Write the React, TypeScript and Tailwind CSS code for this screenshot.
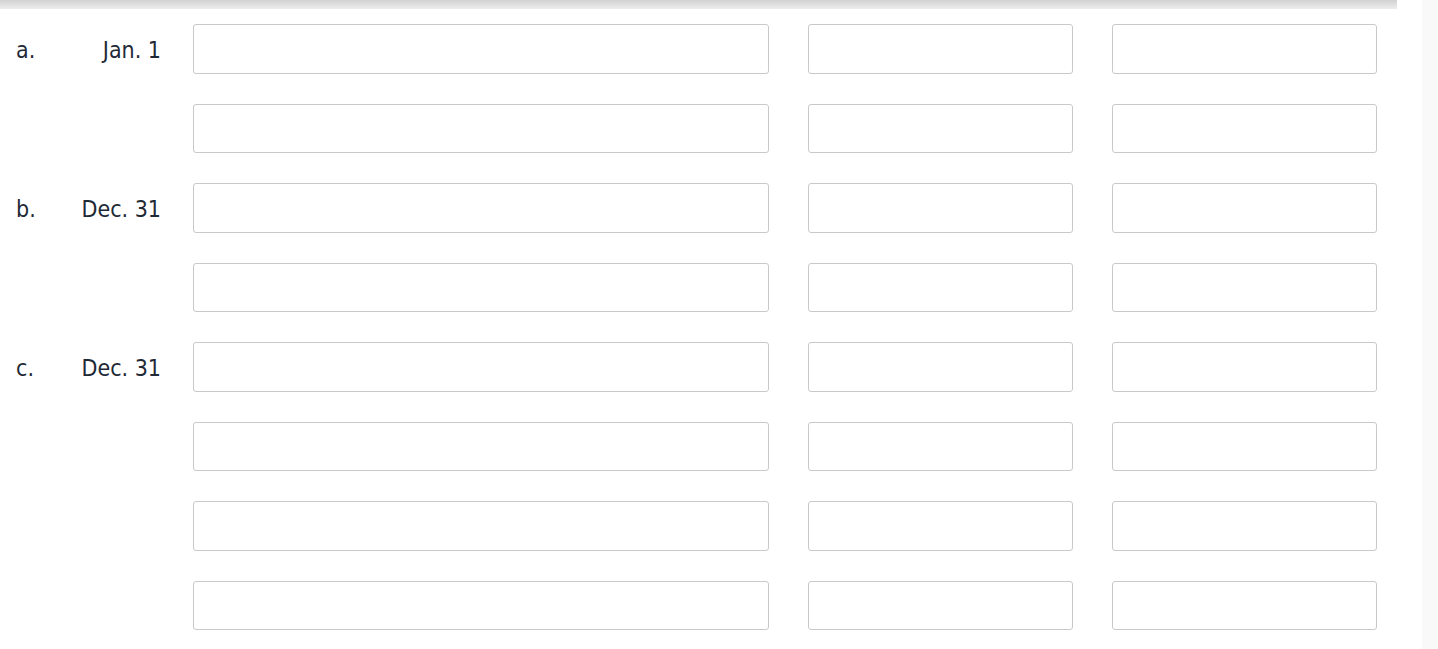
import React from "react";

type Row = { label?: string; date?: string };

const rows: Row[] = [
  { label: "a.", date: "Jan. 1" },
  {},
  { label: "b.", date: "Dec. 31" },
  {},
  { label: "c.", date: "Dec. 31" },
  {},
  {},
  {},
];

function Field({ wide }: { wide?: boolean }) {
  return (
    <input
      type="text"
      className={
        wide
          ? "w-[576px] h-[49.5px] bg-white border border-[#c9c9c9] rounded-[3px] outline-none"
          : "w-[265px] h-[49.5px] bg-white border border-[#c9c9c9] rounded-[3px] outline-none"
      }
    />
  );
}

export default function App() {
  return (
    <div className="flex w-[1438px] h-[649px] bg-white overflow-hidden font-['DejaVu_Sans_Condensed','DejaVu_Sans',sans-serif] text-[23px] text-[#1f2a36]">
      <div className="w-[1422px]">
        {/* top shade */}
        <div className="w-[1397px] h-[9px] bg-gradient-to-b from-[#d2d2d2] to-[#ededed]" />

        <div className="flex flex-col gap-y-[30px] pt-[15px]">
          {rows.map((r, i) => (
            <div key={i} className="flex items-center pl-[16px]">
              <span className="w-[40px] leading-none pt-[3px]">{r.label}</span>
              <span className="w-[105px] text-right leading-none pt-[3px]">{r.date}</span>
              <div className="flex gap-[39px] ml-[32px]">
                <Field wide />
                <Field />
                <Field />
              </div>
            </div>
          ))}
        </div>
      </div>
      <div className="w-[16px] h-full bg-[#f9f9f9]" />
    </div>
  );
}
